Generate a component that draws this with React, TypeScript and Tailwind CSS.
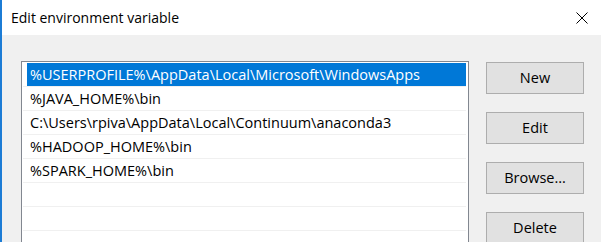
const items = [
  "%USERPROFILE%\\AppData\\Local\\Microsoft\\WindowsApps",
  "%JAVA_HOME%\\bin",
  "C:\\Users\\rpiva\\AppData\\Local\\Continuum\\anaconda3",
  "%HADOOP_HOME%\\bin",
  "%SPARK_HOME%\\bin",
  "",
  "",
  "",
];

const buttons = ["New", "Edit", "Browse...", "Delete"];

export default function App() {
  return (
    <div className="flex h-[242px] w-[601px] flex-col overflow-hidden border-l-2 border-[#1c7cd5] bg-[#f0f0f0] font-['Segoe_UI','Open_Sans',sans-serif] text-[14.5px] text-black">
      <div className="flex h-[35px] shrink-0 items-center justify-between bg-white pl-[9px] pr-[13px]">
        <span className="text-[14px] leading-none">Edit environment variable</span>
        <svg width="12" height="12" viewBox="0 0 12 12" className="mt-[1px]">
          <path d="M0.5 0.5 L11.5 11.5 M11.5 0.5 L0.5 11.5" stroke="#000" strokeWidth="1" />
        </svg>
      </div>

      <div className="flex gap-[17px] pl-[19px] pt-[26px]">
        <div className="w-[448px] shrink-0 border border-[#828790] bg-white pt-[1px]">
          {items.map((text, i) => (
            <div key={i} className="ml-[1px] mr-[2px] h-[24px] border-b border-[#f0f0f0]">
              {i === 0 ? (
                <div className="ml-[4px] flex h-[23px] items-center bg-[#0078d7] pl-[3px] text-white">
                  {text}
                </div>
              ) : (
                <div className="flex h-[23px] items-center pl-[7px]">{text}</div>
              )}
            </div>
          ))}
        </div>

        <div className="flex flex-col gap-[18px] pt-[1px]">
          {buttons.map((b) => (
            <button
              key={b}
              className="flex h-[32px] w-[98px] items-center justify-center border border-[#adadad] bg-[#e1e1e1]"
            >
              {b}
            </button>
          ))}
        </div>
      </div>
    </div>
  );
}
